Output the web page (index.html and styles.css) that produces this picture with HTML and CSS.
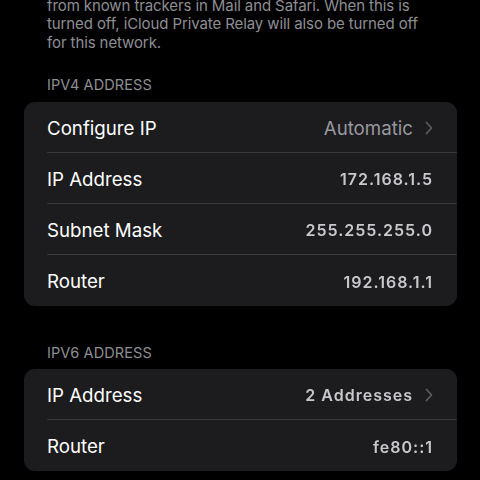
FILE: index.html
```html
<!DOCTYPE html>
<html>
<head>
<meta charset="utf-8">
<link rel="stylesheet" href="styles.css">
</head>
<body>
<div class="page">
  <p class="note">Limit IP address tracking by hiding your IP address<br>from known trackers in Mail and Safari. When this is<br>turned off, iCloud Private Relay will also be turned off<br>for this network.</p>

  <div class="section-title">IPV4 ADDRESS</div>
  <div class="card">
    <div class="row">
      <span class="label">Configure IP</span>
      <span class="value">Automatic<svg class="chev" viewBox="0 0 8 14" width="8" height="14"><path d="M1.5 1.5 L6.5 7 L1.5 12.5" fill="none" stroke="#5a5a5f" stroke-width="1.8" stroke-linecap="round" stroke-linejoin="round"/></svg></span>
    </div>
    <div class="row">
      <span class="label">IP Address</span>
      <span class="value masked">172.168.1.5</span>
    </div>
    <div class="row">
      <span class="label">Subnet Mask</span>
      <span class="value masked">255.255.255.0</span>
    </div>
    <div class="row">
      <span class="label">Router</span>
      <span class="value masked">192.168.1.1</span>
    </div>
  </div>

  <div class="section-title second">IPV6 ADDRESS</div>
  <div class="card">
    <div class="row">
      <span class="label">IP Address</span>
      <span class="value"><span class="masked">2 Addresses</span><svg class="chev" viewBox="0 0 8 14" width="8" height="14"><path d="M1.5 1.5 L6.5 7 L1.5 12.5" fill="none" stroke="#5a5a5f" stroke-width="1.8" stroke-linecap="round" stroke-linejoin="round"/></svg></span>
    </div>
    <div class="row">
      <span class="label">Router</span>
      <span class="value masked">fe80::1</span>
    </div>
  </div>
</div>
</body>
</html>
```

FILE: styles.css
```css
html, body {
  margin: 0;
  padding: 0;
  background: #000;
}
body {
  font-family: Inter, "Liberation Sans", sans-serif;
  color: #fff;
  width: 480px;
  height: 480px;
  overflow: hidden;
}
.page {
  padding: 0 23px 0 24px;
}
.note {
  margin: -22px 0 0 0;
  padding: 0 23px;
  font-size: 15px;
  line-height: 18.6px;
  letter-spacing: -0.1px;
  white-space: nowrap;
  color: #8e8e93;
}
.section-title {
  margin-top: 24px;
  padding: 0 23px;
  font-size: 14.5px;
  line-height: 18px;
  color: #8e8e93;
  letter-spacing: 0.1px;
  margin-bottom: 8px;
}
.section-title.second {
  margin-top: 38px;
  margin-bottom: 7px;
}
.card {
  background: #1c1c1e;
  border-radius: 11px;
  padding-left: 23px;
}
.row {
  display: flex;
  align-items: center;
  justify-content: space-between;
  height: 51px;
  padding-top: 2px;
  padding-right: 24px;
  border-bottom: 1px solid #38383a;
  box-sizing: border-box;
}
.row:last-child {
  border-bottom: none;
}
.label {
  font-size: 18.7px;
  color: #fff;
}
.value {
  display: flex;
  align-items: center;
  font-size: 18.7px;
  color: #98989f;
}
.chev {
  margin-left: 12px;
}
.masked {
  color: #c8c8cc;
  font-size: 16px;
  font-weight: 600;
  letter-spacing: 1px;
  filter: blur(0.7px);
}
```
